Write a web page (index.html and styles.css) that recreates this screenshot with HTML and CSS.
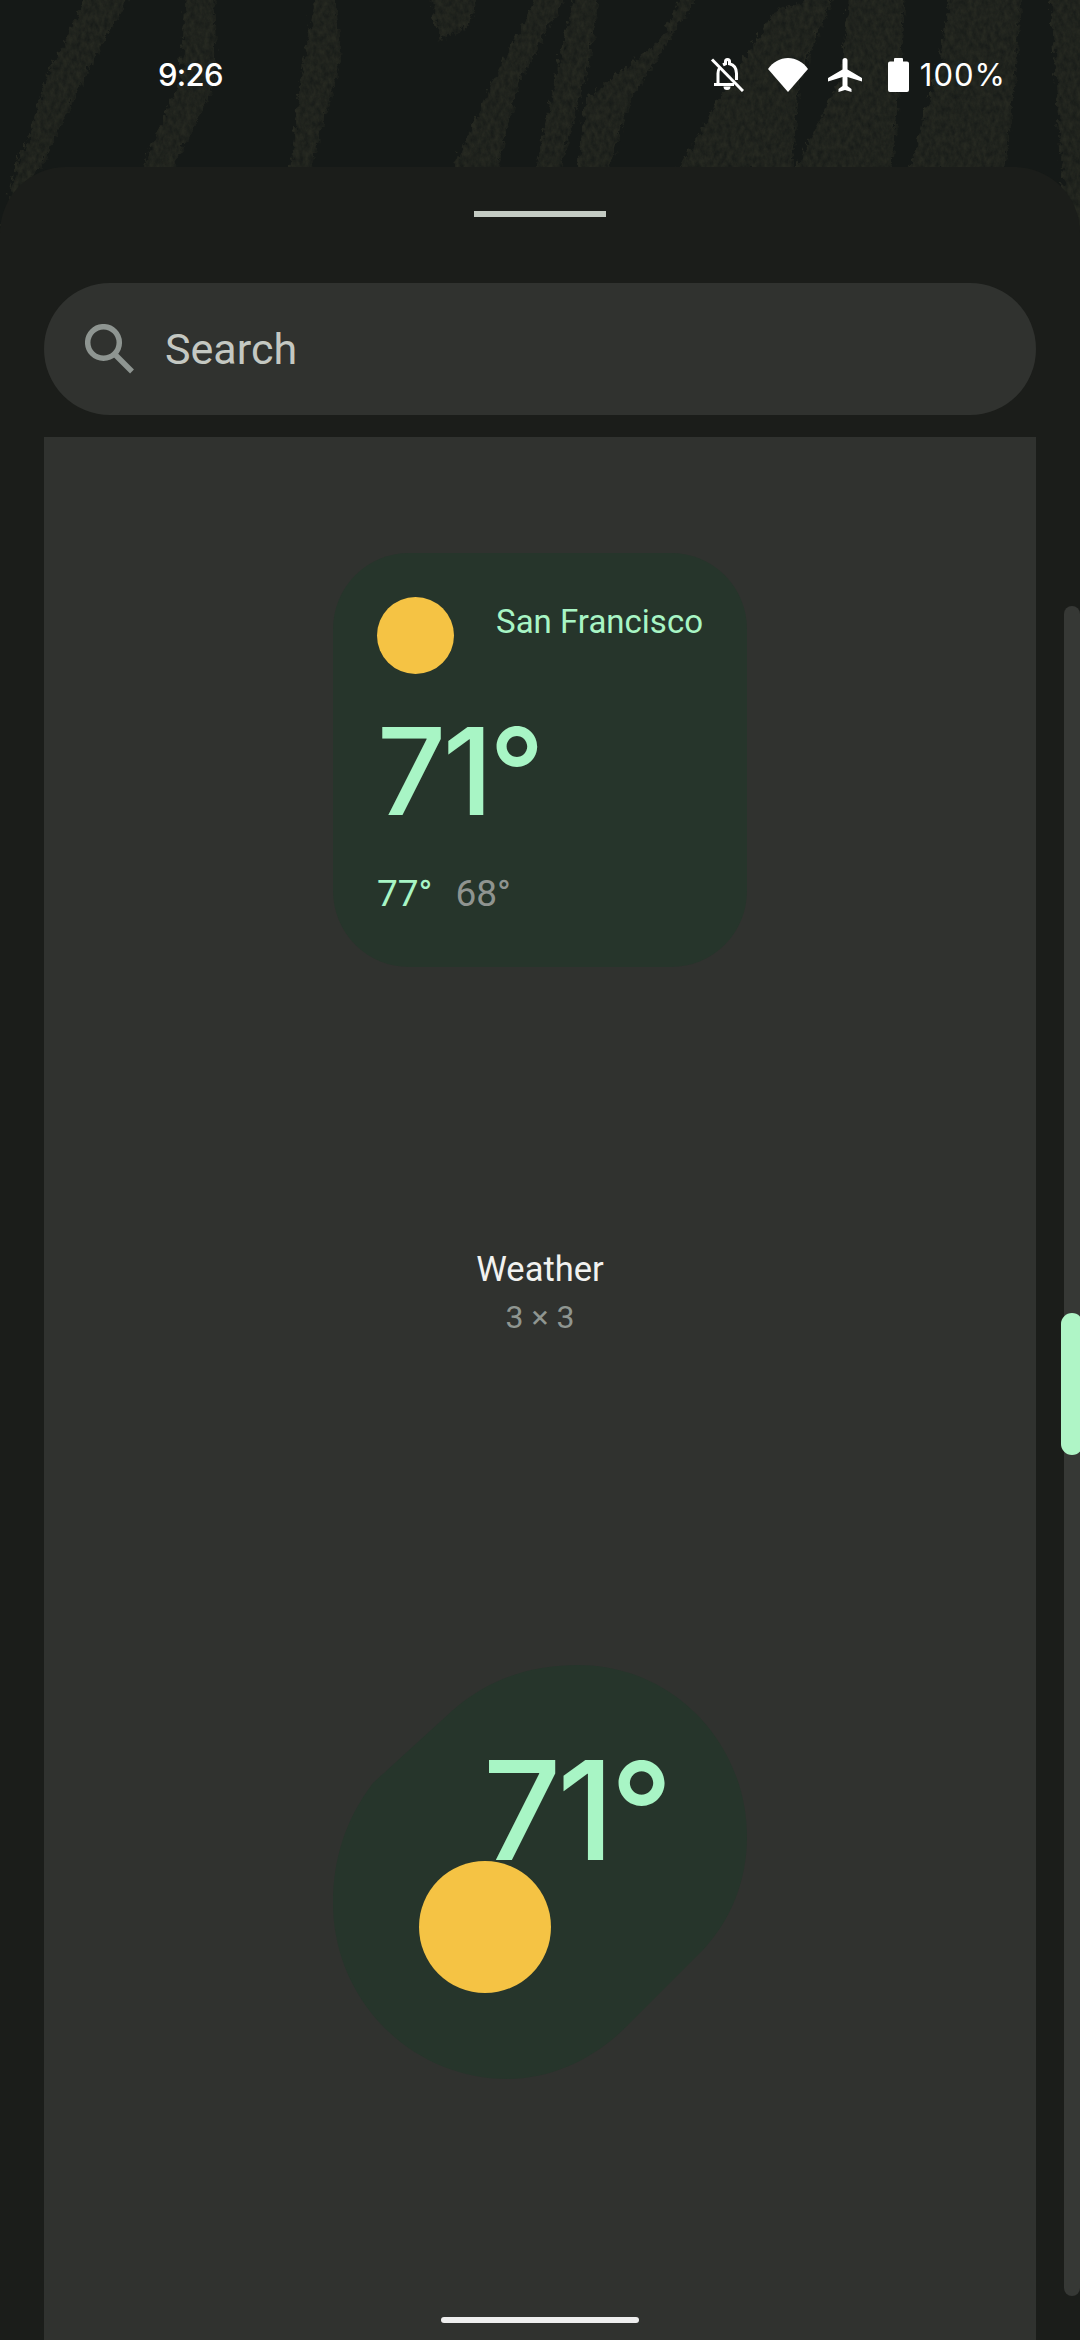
FILE: index.html
```html
<!DOCTYPE html>
<html lang="en">
<head>
<meta charset="utf-8">
<title>Widgets</title>
<link rel="stylesheet" href="styles.css">
</head>
<body>
<div class="phone">
  <svg class="wallpaper" viewBox="0 0 1080 240" aria-hidden="true">
    <defs>
      <filter id="grain" x="0" y="0" width="100%" height="100%" color-interpolation-filters="sRGB">
        <feTurbulence type="fractalNoise" baseFrequency="0.22 0.14" numOctaves="4" seed="7" result="n"/>
        <feDisplacementMap in="SourceGraphic" in2="n" scale="12" xChannelSelector="R" yChannelSelector="G" result="d"/>
        <feColorMatrix in="n" values="0 0 0 0 0.15  0 0 0 0 0.16  0 0 0 0 0.13  1.300 0 0 0 0" result="a"/>
        <feComposite in="a" in2="d" operator="in"/>
      </filter>
    </defs>
    <rect class="wall-base" width="1080" height="240"/>
    <g class="wall-streaks" filter="url(#grain)">
      <polygon points="90,-10 133,-10 83,80 40,170 20,170 45,80"/>
      <polygon points="186,-10 214,-10 217,80 172,170 141,170 180,80"/>
      <polygon points="317,-10 335,-10 341,60 310,170 290,170 303,60"/>
      <polygon points="428,-10 480,-10 470,25 440,40"/>
      <polygon points="540,-10 570,-10 520,80 497,170 452,170 493,80"/>
      <polygon points="575,-10 600,-10 590,60 560,170 535,170"/>
      <polygon points="685,-10 702,-10 630,100 609,170 578,170 585,100 660,40"/>
      <polygon points="776,10 836,-10 800,80 792,170 678,170 730,80"/>
      <polygon points="850,-10 905,-10 900,80 892,170 795,170 840,80"/>
      <polygon points="950,-10 1022,-10 1015,80 1005,170 909,170 940,60"/>
      <polygon points="1050,-10 1090,-10 1090,250 1070,250 1060,150"/>
      <polygon points="20,150 40,150 20,240 0,240"/>
    </g>
  </svg>

  <header class="status">
    <span class="clock">9:26</span>
    <div class="status-right">
      <svg class="ic ic-bell" viewBox="0 0 34 34" aria-hidden="true">
        <path class="stroke" d="M8 26V15.500C8 13 8.500 11.500 9.500 10M13 6.800C14 6.300 15 6 15.500 5.800V3.500a2 2 0 0 1 4 0V5.800C24 7 26.500 10.500 26.500 15.500V22M4 26.500H24"/>
        <path class="fill" d="M13.500 28.500h7a3.500 3.500 0 0 1-7 0z"/>
        <path class="stroke" d="M2 1.500L33 33"/>
      </svg>
      <svg class="ic ic-wifi" viewBox="0 0 40 34" aria-hidden="true">
        <path class="fill" d="M20 34L0 11C5 4 12 0 20 0s15 4 20 11z"/>
      </svg>
      <svg class="ic ic-plane" viewBox="0 0 34 35" aria-hidden="true">
        <path class="fill" d="M14.500 3.500a2.500 2.500 0 0 1 5 0V12.500L34 21v3.500L19.500 20V29l4 3v3L17 33l-6.500 2v-3l4-3V20L0 24.500V21L14.500 12.500z"/>
      </svg>
      <svg class="ic ic-batt" viewBox="0 0 21 35" aria-hidden="true">
        <path class="fill" d="M6 2a1 1 0 0 1 1-1h7a1 1 0 0 1 1 1v2.500h4a2 2 0 0 1 2 2V33a2 2 0 0 1-2 2H2a2 2 0 0 1-2-2V6.500a2 2 0 0 1 2-2h4z"/>
      </svg>
      <span class="pct">100%</span>
    </div>
  </header>

  <main class="sheet">
    <div class="handle"></div>
    <div class="search">
      <svg class="ic-search" viewBox="0 0 50 50" aria-hidden="true">
        <circle cx="18.500" cy="18.500" r="15.800"/>
        <path d="M29.500 30L47 47.500"/>
      </svg>
      <span class="search-text">Search</span>
    </div>

    <section class="panel">
      <div class="card">
        <div class="card-top">
          <span class="sun"></span>
          <span class="city">San Francisco</span>
        </div>
        <div class="temp">71°</div>
        <div class="range"><span class="hi">77°</span><span class="lo">68°</span></div>
      </div>

      <div class="caption">
        <div class="name">Weather</div>
        <div class="dims">3 × 3</div>
      </div>

      <div class="blob">
        <svg class="blob-bg" viewBox="0 0 414 414" aria-hidden="true">
          <path d="M40 118L120 45C160 10 205 0 245 0C340 0 414 78 414 172C414 215 398 255 370 285L295 360C260 396 215 414 175 414C78 414 0 335 0 238C0 195 12 155 40 118Z"/>
        </svg>
        <span class="blob-temp">71°</span>
        <span class="blob-sun"></span>
      </div>
    </section>
  </main>

  <div class="track"></div>
  <div class="thumb"></div>
  <div class="nav-pill"></div>
</div>
</body>
</html>
```
FILE: styles.css
```css
* { box-sizing: border-box; }
html, body { margin: 0; padding: 0; background: #1b1d1a; }
body { font-family: Roboto, "Noto Sans", sans-serif; }

.phone {
  position: relative;
  width: 1080px;
  height: 2340px;
  overflow: hidden;
  background: #151917;
}
.wallpaper {
  position: absolute;
  left: 0;
  top: 0;
  width: 1080px;
  height: 240px;
}
.wall-base { fill: #151917; }
.wall-streaks { fill: #fff; }

.status {
  position: relative;
  display: flex;
  align-items: center;
  justify-content: space-between;
  height: 167px;
  padding: 0 74px 18px 158px;
  color: #fff;
  font-family: Inter, Roboto, sans-serif;
  font-size: 31px;
  font-weight: 500;
}
.clock { letter-spacing: -0.7px; }
.status-right { display: flex; align-items: center; }
.ic { display: block; flex: none; }
.ic-bell { width: 34px; height: 34px; margin-right: 24px; }
.ic-wifi { width: 40px; height: 34px; margin-right: 20px; }
.ic-plane { width: 34px; height: 35px; margin-right: 26px; }
.ic-batt { width: 21px; height: 35px; margin-right: 11px; }
.fill { fill: #fff; }
.stroke { fill: none; stroke: #fff; stroke-width: 3; }
.pct { font-weight: 400; letter-spacing: 1px; }

.sheet {
  position: relative;
  height: 2173px;
  background: #1b1d1a;
  border-radius: 66px 66px 0 0;
  padding: 44px 44px 0;
  overflow: hidden;
}
.handle {
  width: 132px;
  height: 6px;
  margin: 0 auto 66px;
  background: #c4cbc3;
}
.search {
  display: flex;
  align-items: center;
  gap: 30px;
  height: 132px;
  padding-left: 41px;
  background: #30322f;
  border-radius: 66px;
  margin-bottom: 22px;
}
.ic-search { width: 50px; height: 50px; flex: none; fill: none; stroke: #8e9591; stroke-width: 5.500; }
.search-text { color: #c4c8c2; font-size: 43px; font-weight: 400; }

.panel {
  display: flex;
  flex-direction: column;
  align-items: center;
  height: 1903px;
  padding-top: 116px;
  background: #30322f;
}

.card {
  display: flex;
  flex-direction: column;
  width: 414px;
  height: 414px;
  padding: 44px 44px 0 44px;
  background: #26352b;
  border-radius: 76px;
  color: #a8f5c5;
}
.card-top { display: flex; justify-content: space-between; align-items: flex-start; }
.sun { display: block; width: 77px; height: 77px; border-radius: 50%; background: #f5c344; }
.city { font-size: 33px; line-height: 38px; margin-top: 6px; }
.temp {
  font-family: Inter, Roboto, sans-serif;
  font-size: 121px;
  font-weight: 500;
  line-height: 124px;
  margin-top: 35px;
  letter-spacing: -3.500px;
}
.range { display: flex; gap: 23px; font-size: 37px; line-height: 42px; margin-top: 40px; }
.lo { color: #8f9490; }

.caption { margin-top: 280px; text-align: center; }
.name { color: #f2f2f0; font-size: 34.500px; line-height: 44px; }
.dims { color: #8f9691; font-size: 32px; line-height: 52px; }

.blob {
  position: relative;
  width: 414px;
  height: 414px;
  margin-top: 322px;
}
.blob-bg { display: block; width: 414px; height: 414px; fill: #26352b; }
.blob-temp {
  position: absolute;
  left: 150px;
  top: 74px;
  font-family: Inter, Roboto, sans-serif;
  color: #a8f5c5;
  font-size: 137px;
  font-weight: 500;
  line-height: 142px;
  letter-spacing: -4px;
}
.blob-sun {
  position: absolute;
  left: 86px;
  top: 196px;
  width: 132px;
  height: 132px;
  border-radius: 50%;
  background: #f5c344;
}

.track {
  position: absolute;
  right: 0;
  top: 606px;
  width: 16px;
  height: 1690px;
  background: #363835;
  border-radius: 8px;
}
.thumb {
  position: absolute;
  right: -3px;
  top: 1313px;
  width: 22px;
  height: 142px;
  background: #aff5c6;
  border-radius: 11px;
}
.nav-pill {
  position: absolute;
  left: 441px;
  top: 2317px;
  width: 198px;
  height: 6px;
  border-radius: 3px;
  background: #eeeeee;
}
```
